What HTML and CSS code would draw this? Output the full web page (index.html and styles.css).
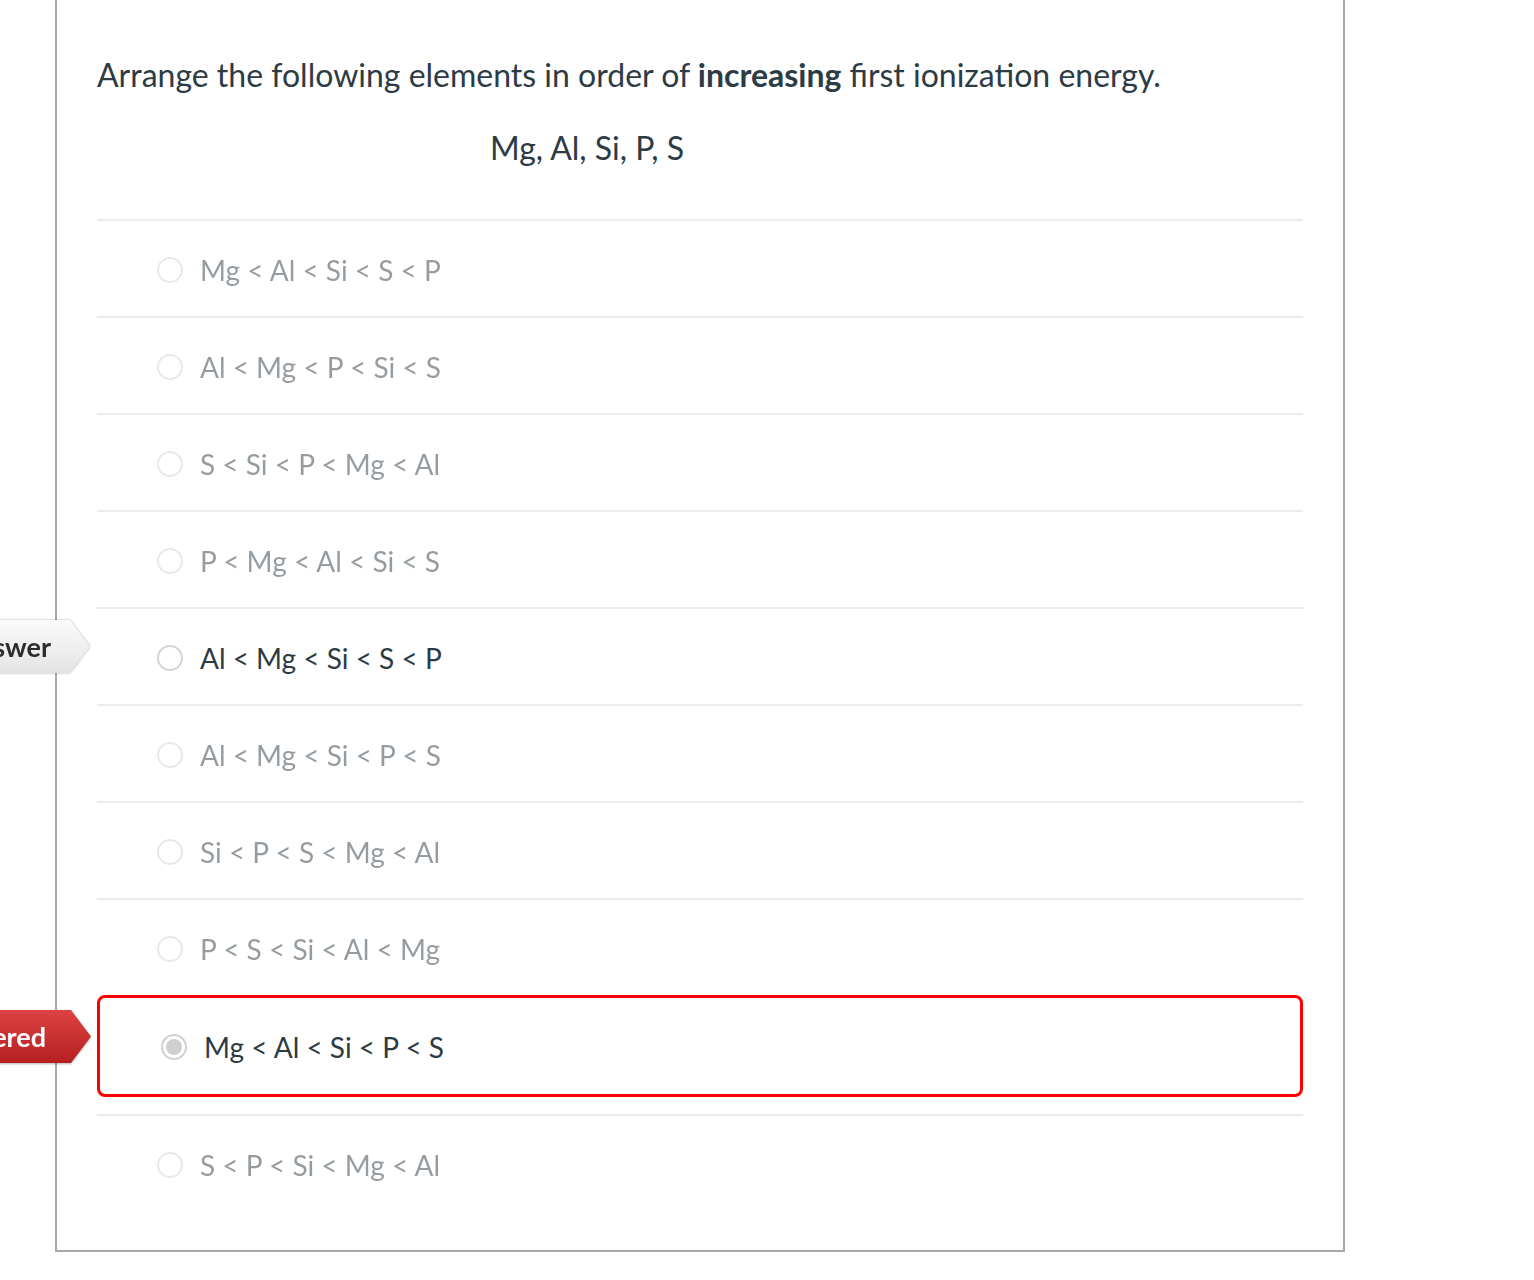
FILE: index.html
```html
<!DOCTYPE html>
<html>
<head>
<meta charset="utf-8">
<link rel="stylesheet" href="styles.css">
</head>
<body>
<div class="quiz">
  <p class="question">Arrange the following elements in order of <strong>increasing</strong> first ionization energy.</p>
  <p class="elements">Mg, Al, Si, P, S</p>
  <div class="answers">
    <div class="answer faded"><span class="radio"></span><span class="label">Mg &lt; Al &lt; Si &lt; S &lt; P</span></div>
    <div class="answer faded"><span class="radio"></span><span class="label">Al &lt; Mg &lt; P &lt; Si &lt; S</span></div>
    <div class="answer faded"><span class="radio"></span><span class="label">S &lt; Si &lt; P &lt; Mg &lt; Al</span></div>
    <div class="answer faded"><span class="radio"></span><span class="label">P &lt; Mg &lt; Al &lt; Si &lt; S</span></div>
    <div class="answer correct"><span class="tag-wrap tag-gray"><span class="tag">Correct Answer</span></span><span class="radio"></span><span class="label">Al &lt; Mg &lt; Si &lt; S &lt; P</span></div>
    <div class="answer faded"><span class="radio"></span><span class="label">Al &lt; Mg &lt; Si &lt; P &lt; S</span></div>
    <div class="answer faded"><span class="radio"></span><span class="label">Si &lt; P &lt; S &lt; Mg &lt; Al</span></div>
    <div class="answer faded"><span class="radio"></span><span class="label">P &lt; S &lt; Si &lt; Al &lt; Mg</span></div>
    <div class="answer selected"><span class="tag-wrap tag-red"><span class="tag">You Answered</span></span><span class="radio checked"></span><span class="label">Mg &lt; Al &lt; Si &lt; P &lt; S</span></div>
    <div class="answer faded after-selected"><span class="radio"></span><span class="label">S &lt; P &lt; Si &lt; Mg &lt; Al</span></div>
  </div>
</div>
</body>
</html>
```

FILE: styles.css
```css
html, body {
  margin: 0;
  padding: 0;
  background: #ffffff;
}

body {
  font-family: Lato, "Open Sans", sans-serif;
  color: #2d3b45;
  overflow: hidden;
}

.quiz {
  margin-left: 55px;
  width: 1206px;
  border: 2px solid #a8a8a8;
  border-top: none;
  padding: 52px 40px 39px 40px;
}

.question {
  margin: 0;
  font-size: 32px;
  line-height: 45px;
}

.question strong {
  font-weight: 700;
}

.elements {
  margin: 28px 0 0 393px;
  font-size: 32px;
  line-height: 45px;
}

.answers {
  margin-top: 49px;
}

.answer {
  position: relative;
  display: flex;
  align-items: center;
  height: 93px;
  padding-top: 2px;
  border-top: 2px solid #ececec;
  padding-left: 60px;
  font-size: 28px;
}

.answer.faded .radio,
.answer.faded .label {
  opacity: 0.5;
}

.radio {
  box-sizing: border-box;
  width: 26px;
  height: 26px;
  border-radius: 50%;
  border: 2px solid #d4d4d4;
  background: #ffffff;
  margin-right: 17px;
  flex: none;
  display: flex;
  align-items: center;
  justify-content: center;
}

.radio.checked {
  border: 2px solid #d0d0d0;
}

.radio.checked::after {
  content: "";
  width: 16px;
  height: 16px;
  border-radius: 50%;
  background: #cfcfcf;
}

.label {
  white-space: nowrap;
}

.answer.selected {
  border: 3px solid #ff0000;
  border-radius: 8px;
  height: 94px;
  padding-top: 2px;
  padding-left: 61px;
}

.answer.after-selected {
  margin-top: 17px;
}

.tag-wrap {
  position: absolute;
  top: 11px;
  right: calc(100% + 7px);
  filter: drop-shadow(0 0 1px rgba(0, 0, 0, 0.35));
}

.tag-red {
  top: 12px;
  right: calc(100% + 9px);
  filter: drop-shadow(0 1px 1px rgba(0, 0, 0, 0.3));
}

.tag {
  display: block;
  height: 53px;
  line-height: 53px;
  padding: 0 39px 0 20px;
  font-size: 27px;
  font-weight: 700;
  white-space: nowrap;
  clip-path: polygon(0 0, calc(100% - 20px) 0, 100% 50%, calc(100% - 20px) 100%, 0 100%);
}

.tag-gray .tag {
  background: linear-gradient(#fbfbfb, #e4e4e4);
  color: #2d2d2d;
}

.tag-red .tag {
  padding-right: 45px;
  background: linear-gradient(#de4242, #b42020);
  color: #ffffff;
}
```
